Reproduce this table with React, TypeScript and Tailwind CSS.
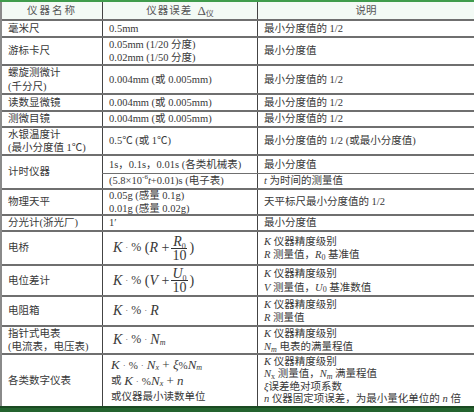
import type { ReactNode } from "react";

function I({ children }: { children: ReactNode }) {
  return <span className="italic">{children}</span>;
}

function Sub({ children, italic }: { children: ReactNode; italic?: boolean }) {
  return (
    <span className={`relative top-[3px] text-[8px] leading-none ${italic ? "italic" : ""}`}>
      {children}
    </span>
  );
}

function Frac({ top, bottom }: { top: ReactNode; bottom: ReactNode }) {
  return (
    <span className="inline-flex flex-col items-center mx-[2px] leading-[13px]">
      <span className="px-[1px]">{top}</span>
      <span className="w-full border-t border-[#333]" />
      <span className="px-[1px]">{bottom}</span>
    </span>
  );
}

function Dot() {
  return <span className="mx-[3px] text-[9px] text-[#555]">·</span>;
}

function Row({ h, last, children }: { h: string; last?: boolean; children: ReactNode }) {
  return (
    <div className={`flex ${h} ${last ? "" : "border-b-2 border-[#6f6f6f]"}`}>{children}</div>
  );
}

function C1({ children, center }: { children: ReactNode; center?: boolean }) {
  return (
    <div
      className={`w-[100px] shrink-0 flex flex-col justify-center px-[6px] overflow-hidden ${center ? "items-center" : ""}`}
    >
      {children}
    </div>
  );
}

function C2({ children, center }: { children: ReactNode; center?: boolean }) {
  return (
    <div
      className={`w-[156px] shrink-0 border-x border-[#444] flex flex-col justify-center px-[6px] overflow-hidden ${center ? "items-center" : ""}`}
    >
      {children}
    </div>
  );
}

function C3({ children, center }: { children: ReactNode; center?: boolean }) {
  return (
    <div
      className={`flex-1 flex flex-col justify-center px-[6px] overflow-hidden whitespace-nowrap ${center ? "items-center" : ""}`}
    >
      {children}
    </div>
  );
}

function Line({ children }: { children: ReactNode }) {
  return <div className="whitespace-nowrap flex items-center">{children}</div>;
}

export default function App() {
  return (
    <div className="w-[474px] h-[412px] bg-white overflow-hidden flex flex-col font-['Liberation_Serif','Noto_Sans_CJK_SC',serif] text-[10.5px] leading-[13.5px] text-[#383838]">
      <div className="h-[2px] shrink-0 bg-[#3f9c4c]" />
      <div className="flex-1 border-l-2 border-[#8a8a8a] flex flex-col">
        <Row h="h-[19px] bg-[#f3faf5] text-[#555]">
          <C1 center>
            <span className="tracking-[2px]">仪器名称</span>
          </C1>
          <C2 center>
            <Line>
              <span className="tracking-[1px]">仪器误差</span>&nbsp;&nbsp;
              <span className="text-[13px]">Δ</span>
              <Sub>仪</Sub>
            </Line>
          </C2>
          <C3 center>说明</C3>
        </Row>
        <Row h="h-[17px]">
          <C1>毫米尺</C1>
          <C2>0.5mm</C2>
          <C3>最小分度值的 1/2</C3>
        </Row>
        <Row h="h-[28px]">
          <C1>游标卡尺</C1>
          <C2>
            <div>0.05mm (1/20 分度)</div>
            <div>0.02mm (1/50 分度)</div>
          </C2>
          <C3>最小分度值</C3>
        </Row>
        <Row h="h-[29px]">
          <C1>
            <div>螺旋测微计</div>
            <div>(千分尺)</div>
          </C1>
          <C2>0.004mm (或 0.005mm)</C2>
          <C3>最小分度值的 1/2</C3>
        </Row>
        <Row h="h-[17px]">
          <C1>读数显微镜</C1>
          <C2>0.004mm (或 0.005mm)</C2>
          <C3>最小分度值的 1/2</C3>
        </Row>
        <Row h="h-[16px]">
          <C1>测微目镜</C1>
          <C2>0.004mm (或 0.005mm)</C2>
          <C3>最小分度值的 1/2</C3>
        </Row>
        <Row h="h-[28px]">
          <C1>
            <div>水银温度计</div>
            <div className="whitespace-nowrap">(最小分度值 1℃)</div>
          </C1>
          <C2>0.5℃ (或 1℃)</C2>
          <C3>最小分度值的 1/2 (或最小分度值)</C3>
        </Row>
        <Row h="h-[34px]">
          <C1>计时仪器</C1>
          <div className="flex-1 flex flex-col">
            <div className="flex h-[18px] border-b border-[#6f6f6f]">
              <C2>
                <Line>1s，0.1s，0.01s (各类机械表)</Line>
              </C2>
              <C3>最小分度值</C3>
            </div>
            <div className="flex flex-1">
              <C2>
                <Line>
                  (5.8×10
                  <span className="relative -top-[4px] text-[7px] leading-none">-6</span>
                  <I>t</I>+0.01)s (电子表)
                </Line>
              </C2>
              <C3>
                <Line>
                  <I>t</I>&nbsp;为时间的测量值
                </Line>
              </C3>
            </div>
          </div>
        </Row>
        <Row h="h-[26px]">
          <C1>物理天平</C1>
          <C2>
            <div>0.05g (感量 0.1g)</div>
            <div>0.01g (感量 0.02g)</div>
          </C2>
          <C3>天平标尺最小分度值的 1/2</C3>
        </Row>
        <Row h="h-[16px]">
          <C1>
            <Line>分光计(浙光厂)</Line>
          </C1>
          <C2>1′</C2>
          <C3>最小分度值</C3>
        </Row>
        <Row h="h-[34px]">
          <C1>电桥</C1>
          <C2>
            <div className="flex items-center whitespace-nowrap text-[14px] pl-[4px]">
              <I>K</I>
              <Dot />
              <span className="text-[12px]">%</span>&nbsp;(<I>R</I>&nbsp;+
              <Frac
                top={
                  <>
                    <I>R</I>
                    <Sub>0</Sub>
                  </>
                }
                bottom="10"
              />
              )
            </div>
          </C2>
          <C3>
            <Line>
              <I>K</I>&nbsp;仪器精度级别
            </Line>
            <Line>
              <I>R</I>&nbsp;测量值，<I>R</I>
              <Sub>0</Sub>&nbsp;基准值
            </Line>
          </C3>
        </Row>
        <Row h="h-[31px]">
          <C1>电位差计</C1>
          <C2>
            <div className="flex items-center whitespace-nowrap text-[14px] pl-[4px]">
              <I>K</I>
              <Dot />
              <span className="text-[12px]">%</span>&nbsp;(<I>V</I>&nbsp;+
              <Frac
                top={
                  <>
                    <I>U</I>
                    <Sub>0</Sub>
                  </>
                }
                bottom="10"
              />
              )
            </div>
          </C2>
          <C3>
            <Line>
              <I>K</I>&nbsp;仪器精度级别
            </Line>
            <Line>
              <I>V</I>&nbsp;测量值，<I>U</I>
              <Sub>0</Sub>&nbsp;基准数值
            </Line>
          </C3>
        </Row>
        <Row h="h-[30px]">
          <C1>电阻箱</C1>
          <C2>
            <div className="flex items-center whitespace-nowrap text-[14px] pl-[4px]">
              <I>K</I>
              <Dot />
              <span className="text-[12px]">%</span>
              <Dot />
              <I>R</I>
            </div>
          </C2>
          <C3>
            <Line>
              <I>K</I>&nbsp;仪器精度级别
            </Line>
            <Line>
              <I>R</I>&nbsp;测量值
            </Line>
          </C3>
        </Row>
        <Row h="h-[28px]">
          <C1>
            <div>指针式电表</div>
            <div className="whitespace-nowrap">(电流表，电压表)</div>
          </C1>
          <C2>
            <div className="flex items-center whitespace-nowrap text-[14px] pl-[4px]">
              <I>K</I>
              <Dot />
              <span className="text-[12px]">%</span>
              <Dot />
              <I>N</I>
              <Sub italic>m</Sub>
            </div>
          </C2>
          <C3>
            <Line>
              <I>K</I>&nbsp;仪器精度级别
            </Line>
            <Line>
              <I>N</I>
              <Sub italic>m</Sub>&nbsp;电表的满量程值
            </Line>
          </C3>
        </Row>
        <Row h="h-[51px]" last>
          <C1>各类数字仪表</C1>
          <C2>
            <div className="flex items-center whitespace-nowrap text-[13px] leading-[16px] pl-[2px]">
              <I>K</I>
              <Dot />
              <span className="text-[11px]">%</span>
              <Dot />
              <I>N</I>
              <Sub italic>x</Sub>&nbsp;+&nbsp;<I>ξ</I>
              <span className="text-[11px]">%</span>
              <I>N</I>
              <Sub italic>m</Sub>
            </div>
            <div className="flex items-center whitespace-nowrap leading-[16px] pl-[2px]">
              或&nbsp;
              <span className="text-[13px] flex items-center">
                <I>K</I>
                <Dot />
                <span className="text-[11px]">%</span>
                <I>N</I>
                <Sub italic>x</Sub>&nbsp;+&nbsp;<I>n</I>
              </span>
            </div>
            <div className="leading-[16px] pl-[2px]">或仪器最小读数单位</div>
          </C2>
          <C3>
            <div className="leading-[12.5px]">
              <Line>
                <I>K</I>&nbsp;仪器精度级别
              </Line>
              <Line>
                <I>N</I>
                <Sub>x</Sub>&nbsp;测量值，<I>N</I>
                <Sub italic>m</Sub>&nbsp;满量程值
              </Line>
              <Line>
                <I>ξ</I>误差绝对项系数
              </Line>
              <Line>
                <I>n</I>&nbsp;仪器固定项误差，为最小量化单位的&nbsp;<I>n</I>&nbsp;倍
              </Line>
            </div>
          </C3>
        </Row>
      </div>
      <div className="h-[6px] shrink-0 bg-[#24632f] border-t-2 border-[#1a4a22]" />
    </div>
  );
}
